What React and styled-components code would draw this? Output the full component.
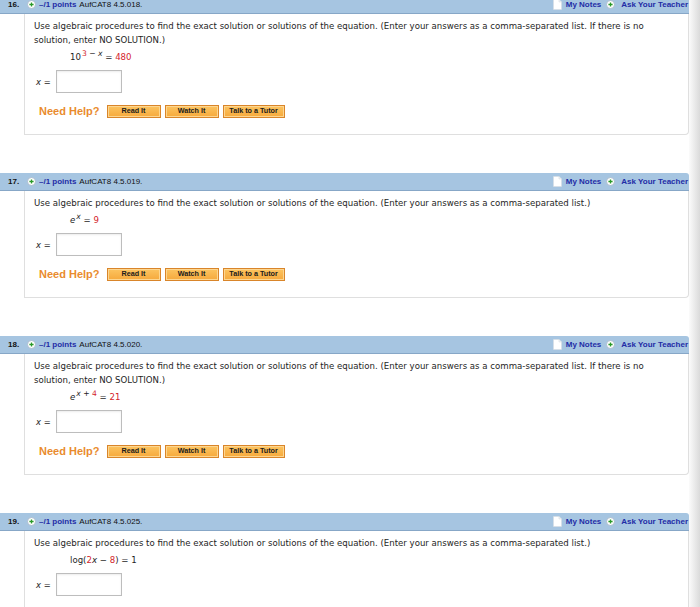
import React from "react";
import styled, { createGlobalStyle } from "styled-components";

const PROMPT =
  "Use algebraic procedures to find the exact solution or solutions of the equation. (Enter your answers as a comma-separated list.";

const questions = [
  {
    num: "16.",
    code: "AufCAT8 4.5.018.",
    noSolution: true,
    eq: () => (
      <>
        10
        <Sup>
          <Red>3</Red> − <i>x</i>
        </Sup>{" "}
        = <Red>480</Red>
      </>
    ),
  },
  {
    num: "17.",
    code: "AufCAT8 4.5.019.",
    noSolution: false,
    eq: () => (
      <>
        <i>e</i>
        <Sup>
          <i>x</i>
        </Sup>{" "}
        = <Red>9</Red>
      </>
    ),
  },
  {
    num: "18.",
    code: "AufCAT8 4.5.020.",
    noSolution: true,
    eq: () => (
      <>
        <i>e</i>
        <Sup>
          <i>x</i> + <Red>4</Red>
        </Sup>{" "}
        = <Red>21</Red>
      </>
    ),
  },
  {
    num: "19.",
    code: "AufCAT8 4.5.025.",
    noSolution: false,
    noHelp: true,
    eq: () => (
      <>
        log(<Red>2</Red>
        <i>x</i> − <Red>8</Red>) = 1
      </>
    ),
  },
];

function PlusIcon() {
  return (
    <svg width="9" height="9" viewBox="0 0 9 9">
      <circle cx="4.5" cy="4.5" r="4" fill="#fff" stroke="#9fb2c4" strokeWidth="0.8" />
      <path d="M4.5 2.4v4.2M2.4 4.5h4.2" stroke="#2a9a2a" strokeWidth="1.3" />
    </svg>
  );
}

function NoteIcon() {
  return (
    <svg width="9" height="11" viewBox="0 0 9 11">
      <path d="M0.5 0.5h5.5l2.5 2.5v7.5h-8z" fill="#fff" stroke="#d8dde3" strokeWidth="0.6" />
      <path d="M6 0.5v2.5h2.5" fill="#eef1f4" stroke="#d8dde3" strokeWidth="0.6" />
    </svg>
  );
}

function Question({ q }) {
  const prompt = PROMPT + (q.noSolution ? " If there is no solution, enter NO SOLUTION.)" : ")");
  return (
    <Card>
      <Header>
        <Num>{q.num}</Num>
        <PlusIcon />
        <Points>–/1 points</Points>
        <Code>{q.code}</Code>
        <Spacer />
        <NoteIcon />
        <Link>My Notes</Link>
        <PlusIcon />
        <Link $gap={6}>Ask Your Teacher</Link>
      </Header>
      <Body>
        <Prompt>{prompt}</Prompt>
        <Equation>{q.eq()}</Equation>
        <AnswerRow>
          <Var>
            <i>x</i> =
          </Var>
          <AnswerBox />
        </AnswerRow>
        {!q.noHelp && (
          <HelpRow>
            <NeedHelp>Need Help?</NeedHelp>
            <HelpButton $w={54}>Read It</HelpButton>
            <HelpButton $w={54}>Watch It</HelpButton>
            <HelpButton $w={62}>Talk to a Tutor</HelpButton>
          </HelpRow>
        )}
      </Body>
    </Card>
  );
}

export default function App() {
  return (
    <>
      <GlobalStyle />
      <Page>
        <Main>
          {questions.map((q) => (
            <Question key={q.num} q={q} />
          ))}
        </Main>
        <Shade />
      </Page>
    </>
  );
}

const GlobalStyle = createGlobalStyle`
  html, body {
    margin: 0;
    padding: 0;
    background: #fff;
  }
  body {
    width: 700px;
    height: 607px;
    overflow: hidden;
  }
`;

const Page = styled.div`
  display: flex;
  width: 700px;
  height: 607px;
  overflow: hidden;
`;

const Main = styled.div`
  flex: none;
  width: 689px;
  margin-top: -4px;
  display: flex;
  flex-direction: column;
  gap: 38px;
`;

const Shade = styled.div`
  flex: 1;
  background: linear-gradient(to right, #fbfbfb, #dadada);
`;

const Card = styled.section``;

const Header = styled.div`
  height: 18px;
  box-sizing: border-box;
  display: flex;
  align-items: center;
  padding: 0 1px 0 8px;
  background: #a6c5e1;
  border-bottom: 1px solid #87a7c7;
  border-top-right-radius: 3px;
  font-family: "Liberation Sans", Arial, sans-serif;
  font-size: 8px;
  color: #111;
`;

const Num = styled.b`
  width: 19px;
`;

const Points = styled.span`
  margin-left: 3px;
  font-weight: bold;
  color: #1f2ca6;
`;

const Code = styled.span`
  margin-left: 3px;
`;

const Spacer = styled.span`
  flex: 1;
`;

const Link = styled.span`
  margin: 0 5px 0 ${(p) => p.$gap || 4}px;
  font-weight: bold;
  color: #1f2ca6;
  &:last-child {
    margin-right: 0;
  }
`;

const Body = styled.div`
  margin-left: 24px;
  padding: 5px 26px 15px 9px;
  border: 1px solid #dfdfdf;
  border-top: none;
  border-bottom-right-radius: 4px;
  font-family: "DejaVu Sans", Verdana, sans-serif;
  font-size: 8.6px;
  line-height: 14px;
  color: #1e1e1e;
`;

const Prompt = styled.p`
  margin: 0;
`;

const Equation = styled.div`
  margin: 3px 0 0 36px;
  font-size: 8.6px;
  line-height: 14px;
`;

const Red = styled.span`
  color: #d3232b;
`;

const Sup = styled.sup`
  font-size: 7.6px;
  line-height: 0;
  vertical-align: 4px;
  margin-left: 1px;
`;

const AnswerRow = styled.div`
  display: flex;
  align-items: center;
  gap: 5px;
  margin-top: 6px;
  padding-left: 2px;
`;

const Var = styled.span`
  font-size: 8.4px;
`;

const AnswerBox = styled.div`
  width: 66px;
  height: 23px;
  box-sizing: border-box;
  background: #fff;
  border: 1px solid #bdbdbd;
  box-shadow: inset 0 1px 2px rgba(0, 0, 0, 0.08);
`;

const HelpRow = styled.div`
  display: flex;
  align-items: center;
  gap: 4px;
  height: 16px;
  margin-top: 10px;
  padding-left: 5px;
`;

const NeedHelp = styled.span`
  margin-right: 3px;
  font-family: "Liberation Sans", Arial, sans-serif;
  font-size: 11px;
  font-weight: bold;
  color: #e98b2e;
`;

const HelpButton = styled.span`
  display: inline-flex;
  align-items: center;
  justify-content: center;
  width: ${(p) => p.$w}px;
  height: 13px;
  box-sizing: border-box;
  background: linear-gradient(#fcc460, #f6a93c);
  border: 1px solid #d9852a;
  box-shadow: inset 0 0 0 1px #fdd690;
  font-family: "Liberation Sans", Arial, sans-serif;
  font-size: 7.2px;
  font-weight: bold;
  color: #1b1b1b;
`;
